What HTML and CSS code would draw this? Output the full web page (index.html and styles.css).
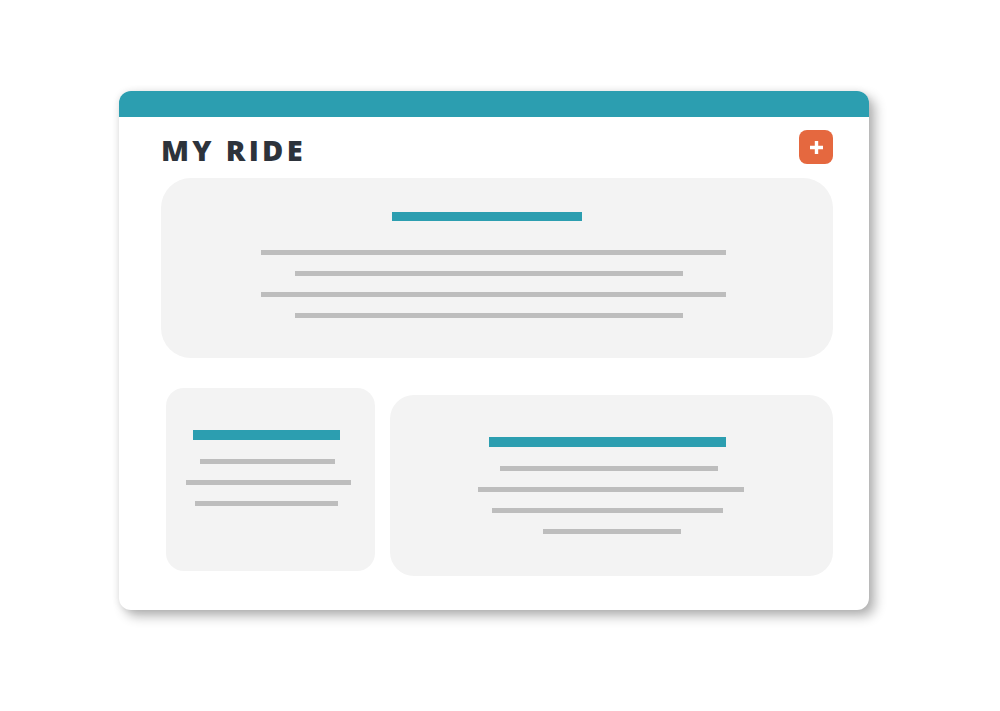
FILE: index.html
```html
<!DOCTYPE html>
<html lang="en">
<head>
<meta charset="utf-8">
<title>My Ride</title>
<link rel="stylesheet" href="styles.css">
</head>
<body>
<div class="window">
  <div class="window-bar"></div>
  <div class="content">
    <div class="title-row">
      <h1 class="title">MY RIDE</h1>
      <button class="add-btn" aria-label="Add">
        <svg width="15" height="15" viewBox="0 0 15 15"><path d="M7.5 1v13M1 7.5h13" stroke="#fff" stroke-width="3.4" stroke-linecap="butt"/></svg>
      </button>
    </div>
    <div class="card card-main">
      <div class="bar teal" style="margin-left:231px;width:190px"></div>
      <div class="lines">
        <div class="bar grey" style="margin-left:100px;width:465px"></div>
        <div class="bar grey" style="margin-left:134px;width:388px"></div>
        <div class="bar grey" style="margin-left:100px;width:465px"></div>
        <div class="bar grey" style="margin-left:134px;width:388px"></div>
      </div>
    </div>
    <div class="bottom-row">
      <div class="card card-small">
        <div class="bar teal tall" style="margin-left:27px;width:147px"></div>
        <div class="lines lines-sm">
          <div class="bar grey" style="margin-left:34px;width:135px"></div>
          <div class="bar grey" style="margin-left:20px;width:165px"></div>
          <div class="bar grey" style="margin-left:29px;width:143px"></div>
        </div>
      </div>
      <div class="card card-wide">
        <div class="bar teal tall" style="margin-left:99px;width:237px"></div>
        <div class="lines lines-sm">
          <div class="bar grey" style="margin-left:110px;width:218px"></div>
          <div class="bar grey" style="margin-left:88px;width:266px"></div>
          <div class="bar grey" style="margin-left:102px;width:231px"></div>
          <div class="bar grey" style="margin-left:153px;width:138px"></div>
        </div>
      </div>
    </div>
  </div>
</div>
</body>
</html>
```
FILE: styles.css
```css
html, body {
  margin: 0;
  padding: 0;
  background: #ffffff;
}
body {
  width: 1000px;
  height: 711px;
  overflow: hidden;
  font-family: "Open Sans", "Liberation Sans", sans-serif;
}
.window {
  margin: 91px 0 0 119px;
  width: 750px;
  height: 519px;
  background: #ffffff;
  border-radius: 12px;
  overflow: hidden;
  box-shadow: 6px 6px 12px rgba(0, 0, 0, 0.3), -1px 0 7px rgba(0, 0, 0, 0.08);
  display: flex;
  flex-direction: column;
}
.window-bar {
  height: 26px;
  background: #2c9eb0;
  flex: none;
}
.content {
  padding: 13px 36px 0 42px;
  display: flex;
  flex-direction: column;
}
.title-row {
  height: 34px;
  display: flex;
  align-items: center;
  justify-content: space-between;
}
.title {
  margin: 0;
  font-family: "Open Sans", "Liberation Sans", sans-serif;
  font-weight: 800;
  font-size: 29px;
  letter-spacing: 3.3px;
  color: #2d333b;
  line-height: 34px;
  padding-top: 5px;
}
.add-btn {
  width: 34px;
  height: 34px;
  border: none;
  padding: 0;
  border-radius: 8px;
  background: #e5683f;
  display: flex;
  align-items: center;
  justify-content: center;
}
.card {
  background: #f3f3f3;
  display: flex;
  flex-direction: column;
  align-items: flex-start;
  box-sizing: border-box;
}
.card-main {
  margin-top: 14px;
  height: 180px;
  border-radius: 30px;
  padding-top: 34px;
}
.bar {
  flex: none;
}
.teal {
  height: 9px;
  background: #2c9eb0;
}
.teal.tall {
  height: 10px;
}
.grey {
  height: 5px;
  background: #bdbdbd;
}
.lines {
  display: flex;
  flex-direction: column;
  gap: 16px;
  margin-top: 29px;
}
.lines-sm {
  margin-top: 19px;
}
.bottom-row {
  display: flex;
  align-items: flex-start;
  margin-top: 30px;
  margin-left: 5px;
  gap: 15px;
}
.card-small {
  width: 209px;
  height: 183px;
  border-radius: 18px;
  padding-top: 42px;
}
.card-wide {
  margin-top: 7px;
  width: 443px;
  height: 181px;
  border-radius: 24px;
  padding-top: 42px;
}
```
